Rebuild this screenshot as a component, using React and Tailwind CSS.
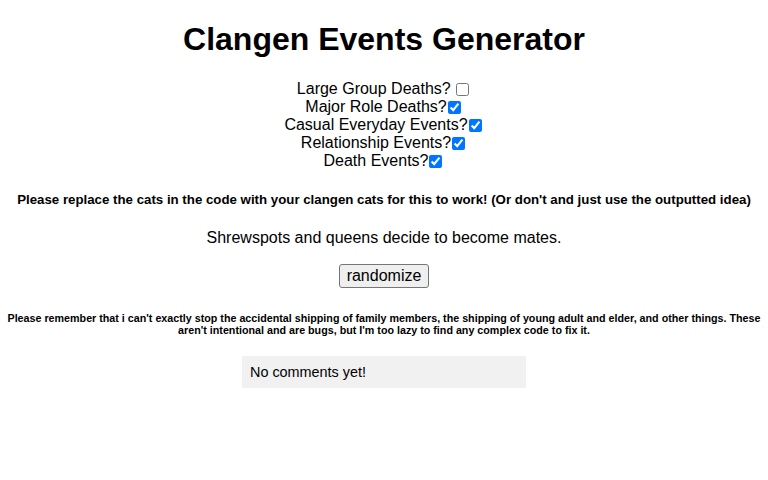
import { useState } from "react";

const options = [
  { label: "Large Group Deaths? ", checked: false },
  { label: "Major Role Deaths?", checked: true },
  { label: "Casual Everyday Events?", checked: true },
  { label: "Relationship Events?", checked: true },
  { label: "Death Events?", checked: true },
];

export default function App() {
  const [event] = useState("Shrewspots and queens decide to become mates.");

  return (
    <div className="min-h-[480px] bg-white text-black text-center font-['Liberation_Sans',Arial,sans-serif] leading-[normal]">
      <h1 className="pt-[21px] mb-[22px] text-[32px] font-bold">
        Clangen Events Generator
      </h1>

      <div className="text-base">
        {options.map((opt) => (
          <div key={opt.label} className="h-[18px] leading-[18px]">
            <span className="whitespace-pre">{opt.label}</span>
            <input
              type="checkbox"
              defaultChecked={opt.checked}
              className="m-[1px_2px_5px_1px] w-[13px] h-[13px] align-[-2px]"
            />
          </div>
        ))}
      </div>

      <h5 className="mt-[22px] text-[13.28px] font-bold">
        Please replace the cats in the code with your clangen cats for this to
        work! (Or don't and just use the outputted idea)
      </h5>

      <p className="mt-[19px] text-base">{event}</p>

      <button className="mt-[14px] px-[7px] py-[2px] text-base bg-[#efefef] border border-[#767676] rounded-[3px] leading-[normal]">
        randomize
      </button>

      <h6 className="mt-[24px] text-[10.72px] font-bold">
        Please remember that i can't exactly stop the accidental shipping of
        family members, the shipping of young adult and elder, and other
        things. These aren't intentional and are bugs, but I'm too lazy to
        find any complex code to fix it.
      </h6>

      <div className="mt-[20px] mx-auto w-[284px] h-[32px] bg-[#f1f1f1] px-2 flex items-center text-left text-[14.4px]">
        No comments yet!
      </div>
    </div>
  );
}
